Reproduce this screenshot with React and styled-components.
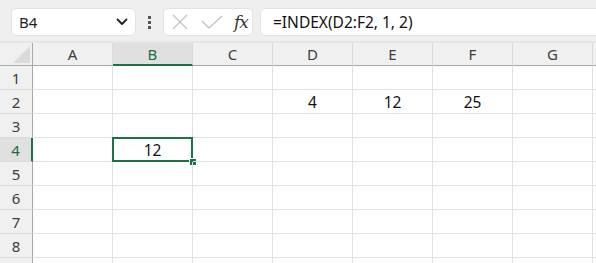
import React from 'react';
import styled, { createGlobalStyle } from 'styled-components';

const columns = ['A', 'B', 'C', 'D', 'E', 'F', 'G'];
const rows = [1, 2, 3, 4, 5, 6, 7, 8];

const values = {
  D2: '4',
  E2: '12',
  F2: '25',
  B4: '12',
};

const active = { col: 'B', row: 4 };

const App = () => {
  return (
    <Sheet>
      <GlobalStyle />
      <Toolbar>
        <NameBox>
          <NameText>B4</NameText>
          <svg width="12" height="8" viewBox="0 0 12 8">
            <path d="M1.5 1.5 L6 6 L10.5 1.5" fill="none" stroke="#222" strokeWidth="1.8" strokeLinecap="round" strokeLinejoin="round" />
          </svg>
        </NameBox>
        <Dots>
          <Dot />
          <Dot />
          <Dot />
        </Dots>
        <IconBox>
          <svg width="16" height="16" viewBox="0 0 16 16">
            <path d="M1 1 L15 15 M15 1 L1 15" stroke="#c4c4c4" strokeWidth="1.3" />
          </svg>
          <svg width="22" height="14" viewBox="0 0 22 14">
            <path d="M1 6 L8 13 L21 1" fill="none" stroke="#c4c4c4" strokeWidth="1.3" />
          </svg>
          <Fx>fx</Fx>
        </IconBox>
        <FormulaBox>=INDEX(D2:F2, 1, 2)</FormulaBox>
      </Toolbar>
      <Grid>
        <Corner>
          <svg width="17" height="17" viewBox="0 0 17 17">
            <path d="M17 0 L17 17 L0 17 Z" fill="#dadada" />
          </svg>
        </Corner>
        {columns.map((c) => (
          <ColHeader key={c} $selected={c === active.col}>{c}</ColHeader>
        ))}
        <ColHeader />
        {rows.map((r) => (
          <React.Fragment key={r}>
            <RowHeader $selected={r === active.row}>{r}</RowHeader>
            {columns.map((c) => (
              <Cell key={c} $active={c === active.col && r === active.row}>
                {values[c + r]}
              </Cell>
            ))}
            <Cell />
          </React.Fragment>
        ))}
        <RowHeader />
        {columns.map((c) => (
          <Cell key={c} />
        ))}
        <Cell />
      </Grid>
    </Sheet>
  );
};

const GlobalStyle = createGlobalStyle`
  html, body {
    margin: 0;
    padding: 0;
    background: #ffffff;
  }
  body {
    font-family: "Noto Sans", "Open Sans", sans-serif;
  }
`;

const Sheet = styled.div`
  width: 596px;
  height: 263px;
  overflow: hidden;
  background: #ffffff;
`;

const Toolbar = styled.div`
  display: flex;
  align-items: flex-start;
  height: 43px;
  padding: 8px 0 0 11px;
  box-sizing: border-box;
  background: #efefef;
  border-bottom: 2px solid #e6e6e6;
`;

const NameBox = styled.div`
  display: flex;
  align-items: center;
  justify-content: space-between;
  width: 125px;
  height: 28px;
  padding: 0 7px 0 7px;
  box-sizing: border-box;
  background: #ffffff;
  border: 1px solid #e3e3e3;
  border-radius: 5px;
`;

const NameText = styled.span`
  font-size: 15px;
  color: #1f1f1f;
`;

const Dots = styled.div`
  display: flex;
  flex-direction: column;
  align-items: center;
  justify-content: center;
  gap: 2px;
  width: 27px;
  height: 28px;
`;

const Dot = styled.span`
  width: 3px;
  height: 3px;
  background: #555555;
`;

const IconBox = styled.div`
  display: flex;
  align-items: center;
  gap: 13px;
  width: 90px;
  height: 28px;
  padding: 0 0 0 8px;
  box-sizing: border-box;
  background: #ffffff;
  border: 1px solid #e3e3e3;
  border-radius: 5px;
`;

const Fx = styled.span`
  font-family: "DejaVu Serif", "Liberation Serif", serif;
  font-style: italic;
  font-size: 17px;
  color: #333333;
  letter-spacing: -1px;
  margin-left: -2px;
`;

const FormulaBox = styled.div`
  flex: 1;
  display: flex;
  align-items: center;
  height: 28px;
  margin-left: 7px;
  margin-right: -10px;
  padding-left: 12px;
  box-sizing: border-box;
  background: #ffffff;
  border: 1px solid #e3e3e3;
  border-radius: 5px;
  font-size: 15.5px;
  color: #111111;
`;

const Grid = styled.div`
  display: grid;
  grid-template-columns: 33px repeat(7, 80px) 80px;
  grid-template-rows: 23px;
  grid-auto-rows: 24px;
  background: #ffffff;
`;

const Corner = styled.div`
  display: flex;
  align-items: flex-end;
  justify-content: flex-end;
  padding: 0 2px 2px 0;
  box-sizing: border-box;
  background: #f0f0f0;
  border-bottom: 1px solid #a8a8a8;
  border-right: 1px solid #a8a8a8;
`;

const ColHeader = styled.div`
  display: flex;
  align-items: center;
  justify-content: center;
  box-sizing: border-box;
  font-size: 15px;
  color: ${({ $selected }) => ($selected ? '#1d6b40' : '#3d3d3d')};
  background: ${({ $selected }) => ($selected ? '#e0e0e0' : '#f0f0f0')};
  border-right: 1px solid #dadada;
  border-bottom: ${({ $selected }) => ($selected ? '2px solid #1e7145' : '1px solid #a8a8a8')};
`;

const RowHeader = styled.div`
  display: flex;
  align-items: center;
  justify-content: center;
  box-sizing: border-box;
  font-size: 15px;
  color: ${({ $selected }) => ($selected ? '#1d6b40' : '#3d3d3d')};
  background: ${({ $selected }) => ($selected ? '#e0e0e0' : '#f0f0f0')};
  border-bottom: 1px solid #dadada;
  border-right: ${({ $selected }) => ($selected ? '2px solid #1e7145' : '1px solid #a8a8a8')};
`;

const Cell = styled.div`
  position: relative;
  display: flex;
  align-items: center;
  justify-content: center;
  box-sizing: border-box;
  font-size: 15.5px;
  color: #111111;
  border-right: 1px solid #e1e1e1;
  border-bottom: 1px solid #e1e1e1;

  ${({ $active }) =>
    $active &&
    `
    &::before {
      content: '';
      position: absolute;
      left: -1px;
      top: -1px;
      right: -1px;
      bottom: -1px;
      border: 2px solid #1e7145;
      pointer-events: none;
    }
    &::after {
      content: '';
      position: absolute;
      right: -4px;
      bottom: -4px;
      width: 6px;
      height: 6px;
      background: #1e7145;
      border-left: 1px solid #fff;
      border-top: 1px solid #fff;
    }
  `}
`;

export default App;
